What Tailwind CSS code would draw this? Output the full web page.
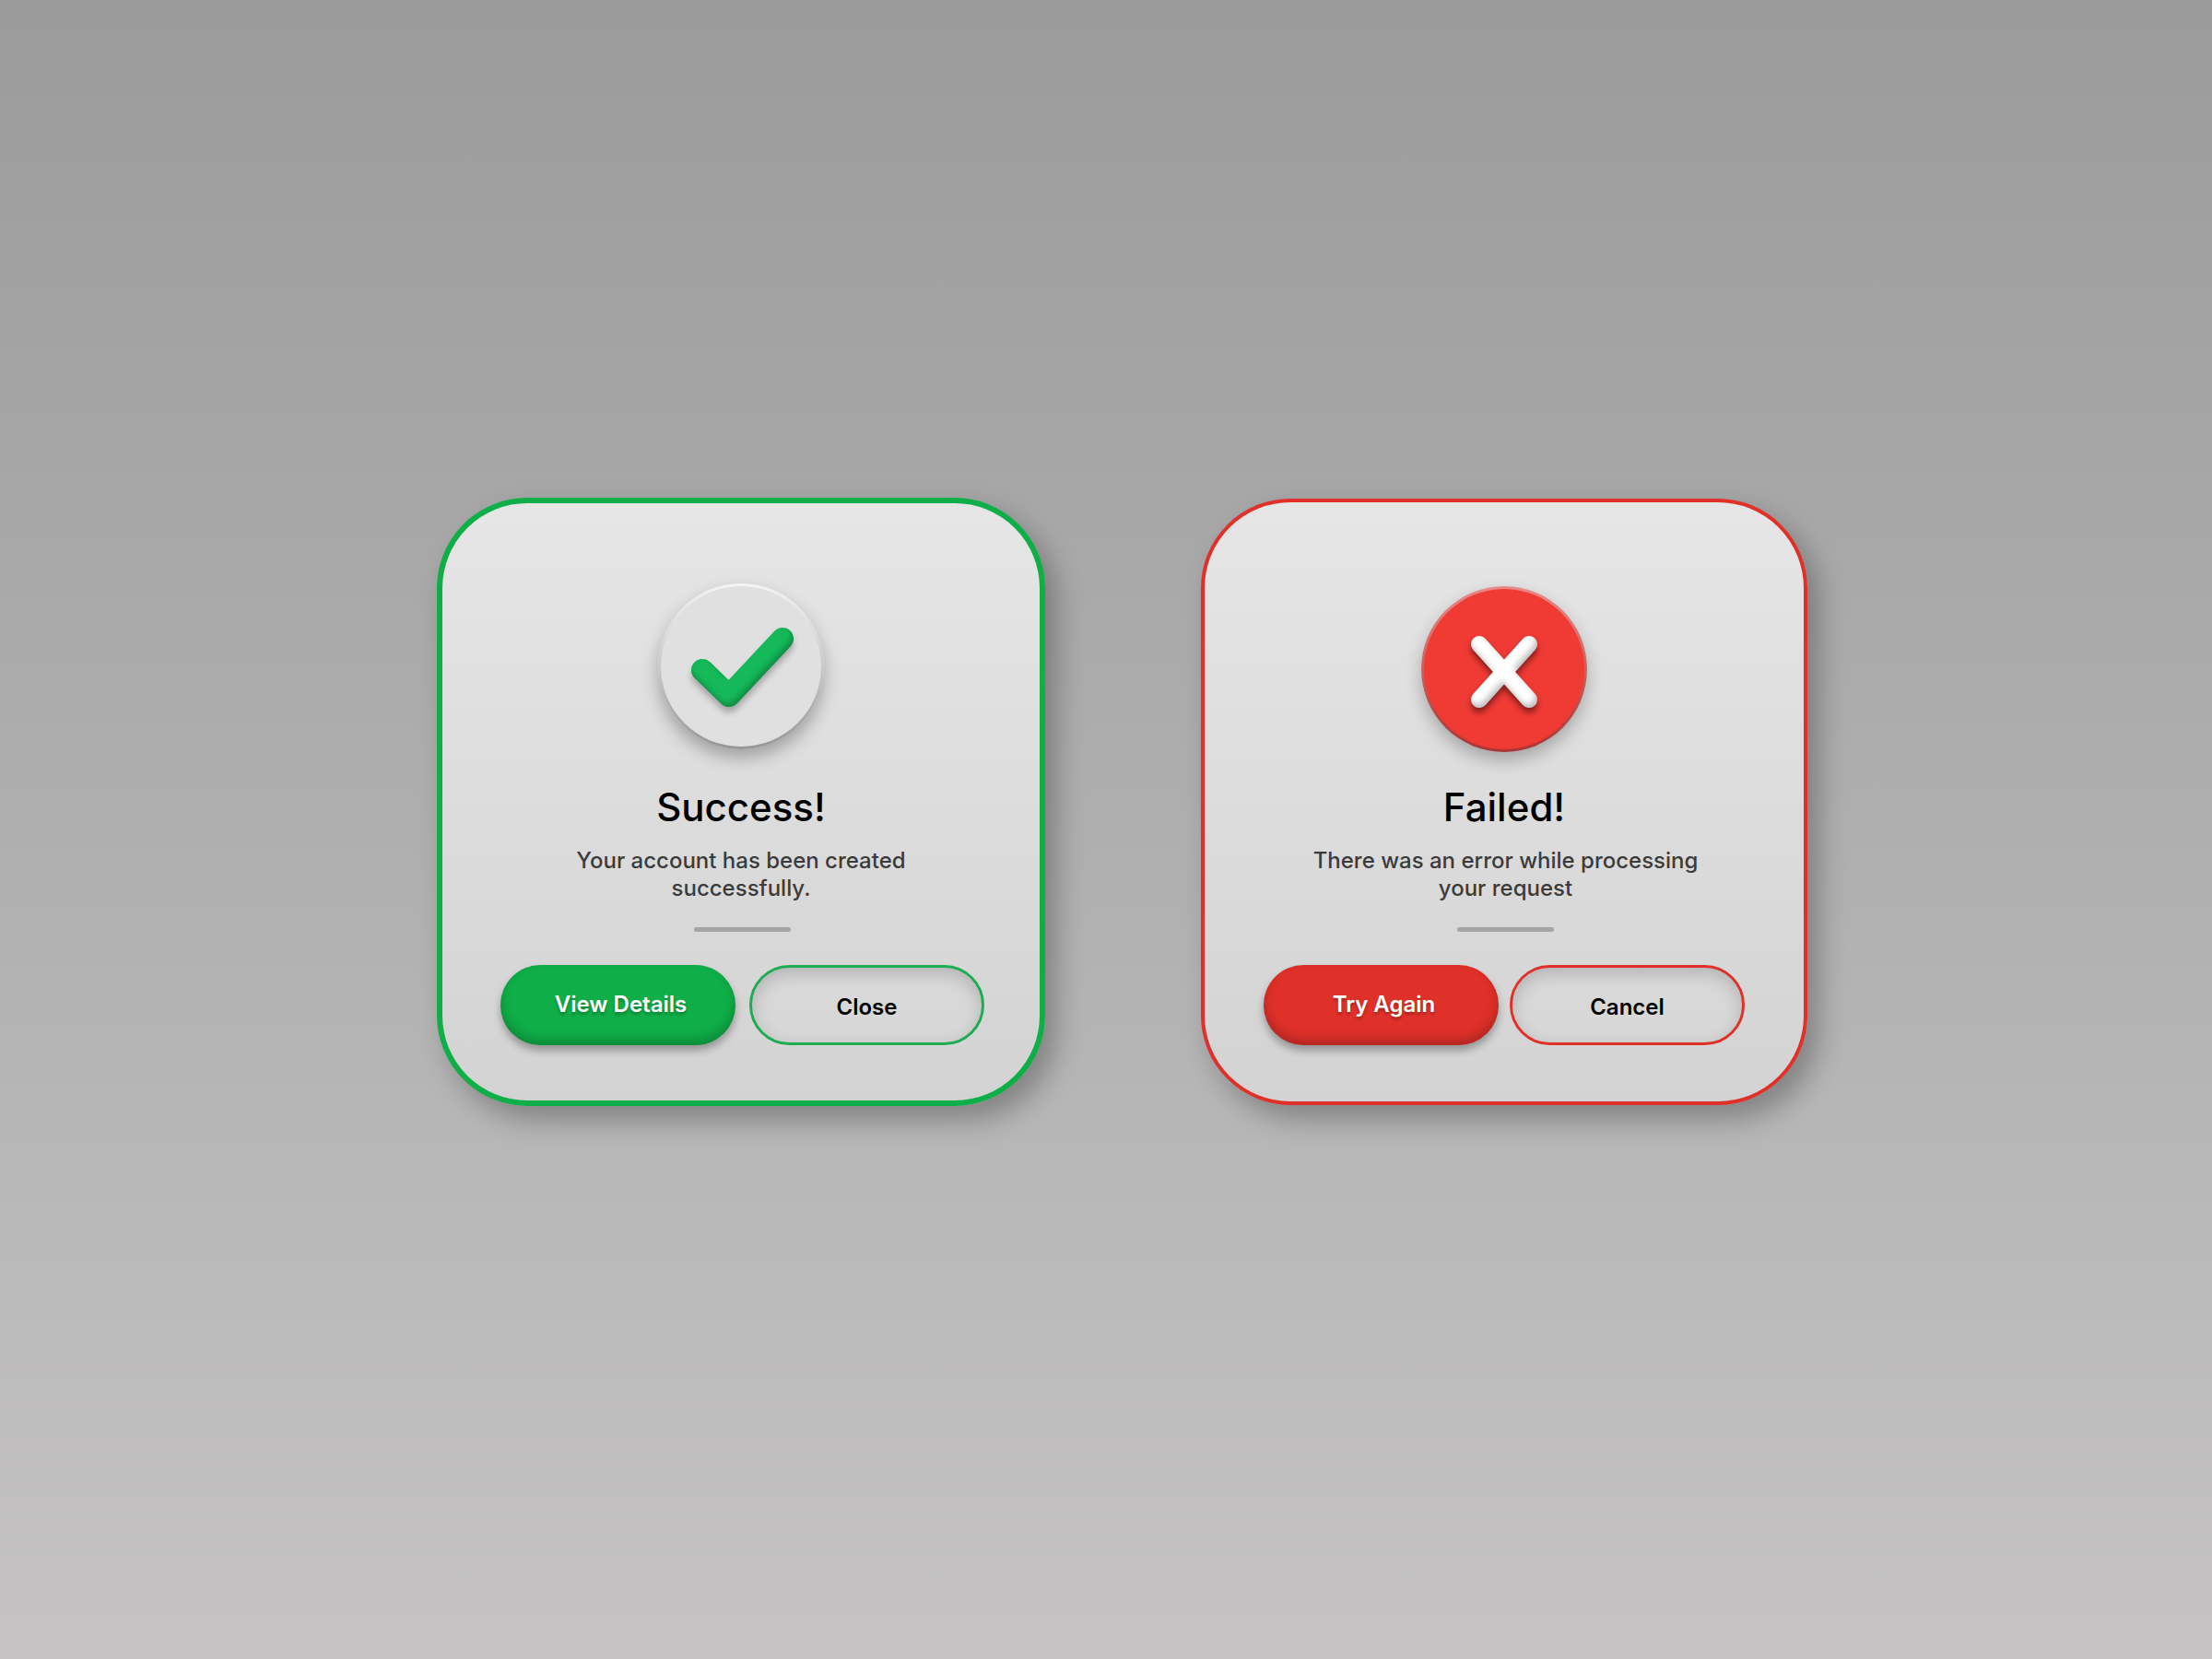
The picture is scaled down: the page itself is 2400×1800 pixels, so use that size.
<!DOCTYPE html>
<html lang="en">
<head>
<meta charset="utf-8">
<meta name="viewport" content="width=device-width, initial-scale=1">
<title>Status dialogs</title>
<script src="https://cdn.jsdelivr.net/npm/@tailwindcss/browser@4"></script>
</head>
<body class="font-['Inter',sans-serif] text-black">
<main class="flex min-h-screen flex-wrap items-center justify-center gap-[169px] bg-linear-to-b from-[#9b9b9b] to-[#c5c3c4] pb-[60px] pl-[35px]">

  <!-- Success dialog -->
  <section aria-labelledby="success-title" class="flex w-full max-w-[660px] flex-col items-center rounded-[98px] border-6 border-[#0fae48] bg-linear-to-b from-[#e6e6e6] to-[#d3d3d3] pt-[87px] pb-[60px] shadow-[12px_15px_30px_rgba(0,0,0,0.28)]">
    <div class="rounded-full bg-linear-to-b from-[#f4f4f4] via-[#c9c9c9] to-[#979797] p-[3px] shadow-[0_9px_18px_rgba(0,0,0,0.28)]">
      <svg class="block size-[174px] overflow-visible rounded-full bg-[#e0e0e0]" viewBox="3 3 174 174" fill="none" aria-hidden="true">
        <defs>
          <filter id="check-depth" x="0" y="0" width="180" height="180" filterUnits="userSpaceOnUse" color-interpolation-filters="sRGB">
            <feGaussianBlur in="SourceAlpha" stdDeviation="3" result="soft"/>
            <feOffset in="soft" dx="-2" dy="-4" result="moved"/>
            <feComposite in="SourceAlpha" in2="moved" operator="out" result="rim"/>
            <feFlood flood-color="#000" flood-opacity="0.25"/>
            <feComposite in2="rim" operator="in" result="inner"/>
            <feOffset in="soft" dy="6" result="below"/>
            <feFlood flood-color="#000" flood-opacity="0.25"/>
            <feComposite in2="below" operator="in" result="drop"/>
            <feMerge><feMergeNode in="drop"/><feMergeNode in="SourceGraphic"/><feMergeNode in="inner"/></feMerge>
          </filter>
        </defs>
        <path d="M48 94 77 122 135 60" stroke="#15b95a" stroke-width="24" stroke-linecap="round" stroke-linejoin="round" filter="url(#check-depth)"/>
      </svg>
    </div>
    <h2 id="success-title" class="mt-[38px] text-[42px] leading-[50px] font-medium">Success!</h2>
    <p class="mt-[18px] max-w-[440px] text-center text-2xl leading-[30px] font-medium text-[#3b3b3b]">Your account has been created successfully.</p>
    <hr class="mt-[27px] ml-[3px] h-[5px] w-[105px] rounded-full border-0 bg-[#a5a5a5]">
    <div class="mt-9 ml-[3px] flex gap-[15px]">
      <button type="button" class="h-[87px] w-[255px] rounded-full bg-[#0fae48] pb-0.5 pl-1.5 text-2xl font-semibold text-white shadow-[0_6px_9px_rgba(0,0,0,0.3),inset_0_-6px_12px_rgba(0,0,0,0.22)] text-shadow-[0_3px_3px_rgba(0,0,0,0.25)]">View Details</button>
      <button type="button" class="h-[87px] w-[255px] rounded-full border-3 border-[#1eab53] bg-white/5 pt-1 text-2xl font-semibold shadow-[inset_0_6px_18px_rgba(0,0,0,0.18)]">Close</button>
    </div>
  </section>

  <!-- Failure dialog -->
  <section aria-labelledby="failed-title" class="flex w-full max-w-[658px] flex-col items-center rounded-[97px] border-4 border-[#e0302a] bg-linear-to-b from-[#e6e6e6] to-[#d3d3d3] pt-[91px] pb-[61px] shadow-[12px_15px_30px_rgba(0,0,0,0.28)]">
    <div class="rounded-full bg-linear-to-b from-[#e98a88] via-[#cc5f5c] to-[#a83634] p-[3px] shadow-[0_9px_18px_rgba(0,0,0,0.25)]">
      <svg class="block size-[174px] overflow-visible rounded-full bg-[#f03a34]" viewBox="3 3 174 174" fill="none" aria-hidden="true">
        <defs>
          <filter id="cross-depth" x="0" y="0" width="180" height="180" filterUnits="userSpaceOnUse" color-interpolation-filters="sRGB">
            <feGaussianBlur in="SourceAlpha" stdDeviation="3" result="soft"/>
            <feOffset in="soft" dx="-2" dy="-4" result="moved"/>
            <feComposite in="SourceAlpha" in2="moved" operator="out" result="rim"/>
            <feFlood flood-color="#000" flood-opacity="0.25"/>
            <feComposite in2="rim" operator="in" result="inner"/>
            <feOffset in="soft" dy="5" result="below"/>
            <feFlood flood-color="#000" flood-opacity="0.45"/>
            <feComposite in2="below" operator="in" result="drop"/>
            <feMerge><feMergeNode in="drop"/><feMergeNode in="SourceGraphic"/><feMergeNode in="inner"/></feMerge>
          </filter>
        </defs>
        <path d="M63 63 117 123M117 63 63 123" stroke="#fff" stroke-width="18" stroke-linecap="round" filter="url(#cross-depth)"/>
      </svg>
    </div>
    <h2 id="failed-title" class="mt-[35px] text-[42px] leading-[50px] font-medium">Failed!</h2>
    <p class="mt-[18px] ml-[3px] max-w-[440px] text-center text-2xl leading-[30px] font-medium text-[#3b3b3b]">There was an error while processing your request</p>
    <hr class="mt-[27px] ml-[3px] h-[5px] w-[105px] rounded-full border-0 bg-[#a5a5a5]">
    <div class="mt-9 flex gap-3">
      <button type="button" class="h-[87px] w-[255px] rounded-full bg-[#e0302a] pb-0.5 pl-1.5 text-2xl font-semibold text-white shadow-[0_6px_9px_rgba(0,0,0,0.3),inset_0_-6px_12px_rgba(0,0,0,0.22)] text-shadow-[0_3px_3px_rgba(0,0,0,0.25)]">Try Again</button>
      <button type="button" class="h-[87px] w-[255px] rounded-full border-3 border-[#e0302a] bg-white/5 pt-1 text-2xl font-semibold shadow-[inset_0_6px_18px_rgba(0,0,0,0.18)]">Cancel</button>
    </div>
  </section>
</main>
</body>
</html>
